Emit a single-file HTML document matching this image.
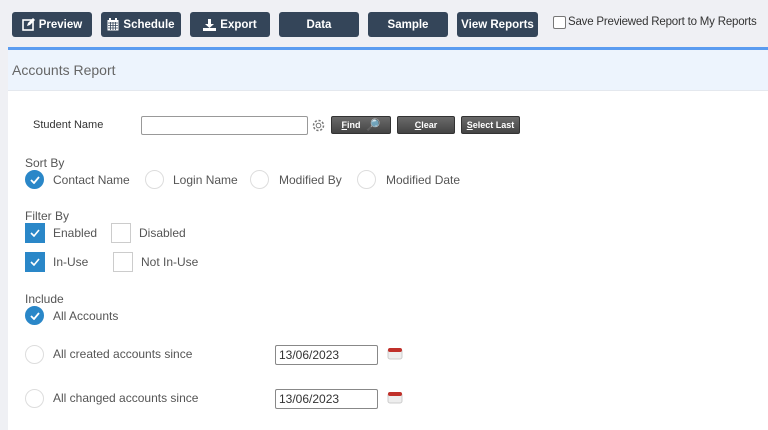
<!DOCTYPE html>
<html><head><style>
body{margin:0;width:768px;height:430px;background:#eff0f4;font-family:"Liberation Sans",sans-serif;position:relative;overflow:hidden;color:#555}
.a{position:absolute}
.btn{position:absolute;top:12px;height:25px;width:80px;background:#344559;border-radius:3px;color:#fff;font-size:11.5px;font-weight:bold;display:flex;align-items:center;justify-content:center;gap:4px}
.t{position:absolute;font-size:12px;color:#555;white-space:nowrap}
.rad{position:absolute;width:17px;height:17px;border:1px solid #ddd;border-radius:50%;background:#fff}
.rad.on{background:#2a87c8;border-color:#2a87c8}
.cb{position:absolute;width:18px;height:18px;border:1px solid #ccc;background:#fff}
.cb.on{background:#2a87c8;border-color:#2a87c8}
.on svg{position:absolute;left:4px;top:5px}
.gb{position:absolute;top:116px;height:16px;background:linear-gradient(#6a6a6a,#444);color:#fff;font-size:9px;font-weight:bold;display:flex;align-items:center;justify-content:center;border:1px solid #333;border-radius:2px}
.inp{position:absolute;background:#fff;border:1px solid #888;border-radius:2px;font-size:12px;color:#333;box-sizing:border-box;padding-left:3px;line-height:18px}
</style></head><body>
<div class="btn" style="left:12px"><svg width="13" height="13" viewBox="0 0 13 13"><rect x="1" y="2" width="10" height="10" fill="none" stroke="#fff" stroke-width="1.6"/><path d="M5 8l1-3 5-5 2 2-5 5z" fill="#fff"/></svg>Preview</div>
<div class="btn" style="left:101px"><svg width="12" height="13" viewBox="0 0 12 13"><rect x="0.5" y="2" width="11" height="10.5" fill="#fff"/><rect x="2" y="0" width="2" height="3" fill="#fff"/><rect x="8" y="0" width="2" height="3" fill="#fff"/><path d="M1 5h10M1 7.5h10M1 10h10M3.5 4v8M6 4v8M8.5 4v8" stroke="#344559" stroke-width=".8"/></svg>Schedule</div>
<div class="btn" style="left:190px"><svg width="13" height="12" viewBox="0 0 13 12"><path d="M5 0h3v5h3L6.5 9 2 5h3z" fill="#fff"/><rect x="0" y="9" width="13" height="3" fill="#fff"/></svg>Export</div>
<div class="btn" style="left:279px">Data</div>
<div class="btn" style="left:368px">Sample</div>
<div class="btn" style="left:457px;width:81px">View Reports</div>
<div class="a" style="left:553px;top:16px;width:11px;height:11px;border:1px solid #777;border-radius:2px;background:#fff"></div>
<div class="t" style="left:568px;top:16px;color:#333;font-size:11.5px;letter-spacing:-0.2px">Save Previewed Report to My Reports</div>
<div class="a" style="left:8px;top:47px;width:760px;height:3px;background:#5b9cf0"></div>
<div class="a" style="left:8px;top:50px;width:760px;height:40px;background:#edf4fd;border-bottom:1px solid #e4e8ee"></div>
<div class="t" style="left:12px;top:62px;font-size:14px;color:#666">Accounts Report</div>
<div class="a" style="left:8px;top:91px;width:760px;height:339px;background:#fff"></div>
<div class="t" style="left:33px;top:119px;font-size:11px;color:#333">Student Name</div>
<div class="inp" style="left:141px;top:116px;width:167px;height:19px;border-color:#999"></div>
<svg class="a" style="left:311px;top:118px" width="15" height="15" viewBox="0 0 15 15"><circle cx="7.5" cy="7.5" r="5" fill="none" stroke="#777" stroke-width="1.5" stroke-dasharray="2.2 1.7"/><circle cx="7.5" cy="7.5" r="2.3" fill="none" stroke="#777"/></svg>
<div class="gb" style="left:331px;width:58px"><u>F</u>ind&nbsp;&nbsp;<span style="color:#9ccfff;font-size:12px">🔎</span></div>
<div class="gb" style="left:397px;width:56px"><u>C</u>lear</div>
<div class="gb" style="left:461px;width:57px"><u>S</u>elect Last</div>
<div class="t" style="left:25px;top:156px">Sort By</div>
<div class="rad on" style="left:25px;top:170px"><svg width="10" height="8" viewBox="0 0 10 8" style="position:absolute;left:4px;top:5px"><path d="M1 4l3 3 5-6" fill="none" stroke="#fff" stroke-width="1.8"/></svg></div>
<div class="t" style="left:53px;top:173px">Contact Name</div>
<div class="rad" style="left:145px;top:170px"></div><div class="t" style="left:173px;top:173px">Login Name</div>
<div class="rad" style="left:250px;top:170px"></div><div class="t" style="left:279px;top:173px">Modified By</div>
<div class="rad" style="left:357px;top:170px"></div><div class="t" style="left:386px;top:173px">Modified Date</div>
<div class="t" style="left:25px;top:209px">Filter By</div>
<div class="cb on" style="left:25px;top:223px"><svg width="10" height="8" viewBox="0 0 10 8"><path d="M1 4l3 3 5-6" fill="none" stroke="#fff" stroke-width="1.6"/></svg></div>
<div class="t" style="left:53px;top:226px">Enabled</div>
<div class="cb" style="left:111px;top:223px"></div><div class="t" style="left:139px;top:226px">Disabled</div>
<div class="cb on" style="left:25px;top:252px"><svg width="10" height="8" viewBox="0 0 10 8"><path d="M1 4l3 3 5-6" fill="none" stroke="#fff" stroke-width="1.6"/></svg></div>
<div class="t" style="left:53px;top:255px">In-Use</div>
<div class="cb" style="left:113px;top:252px"></div><div class="t" style="left:141px;top:255px">Not In-Use</div>
<div class="t" style="left:25px;top:292px">Include</div>
<div class="rad on" style="left:25px;top:306px"><svg width="10" height="8" viewBox="0 0 10 8" style="position:absolute;left:4px;top:5px"><path d="M1 4l3 3 5-6" fill="none" stroke="#fff" stroke-width="1.8"/></svg></div>
<div class="t" style="left:53px;top:309px">All Accounts</div>
<div class="rad" style="left:25px;top:345px"></div><div class="t" style="left:53px;top:347px">All created accounts since</div>
<div class="inp" style="left:275px;top:345px;width:103px;height:20px">13/06/2023</div>
<svg class="a" style="left:387px;top:347px" width="16" height="13" viewBox="0 0 16 13"><rect x="1" y="2" width="14" height="10" rx="2" fill="#eee" stroke="#ccc"/><rect x="1" y="1" width="14" height="4" rx="2" fill="#c0302a"/></svg>
<div class="rad" style="left:25px;top:389px"></div><div class="t" style="left:53px;top:391px">All changed accounts since</div>
<div class="inp" style="left:275px;top:389px;width:103px;height:20px">13/06/2023</div>
<svg class="a" style="left:387px;top:391px" width="16" height="13" viewBox="0 0 16 13"><rect x="1" y="2" width="14" height="10" rx="2" fill="#eee" stroke="#ccc"/><rect x="1" y="1" width="14" height="4" rx="2" fill="#c0302a"/></svg>
</body></html>
